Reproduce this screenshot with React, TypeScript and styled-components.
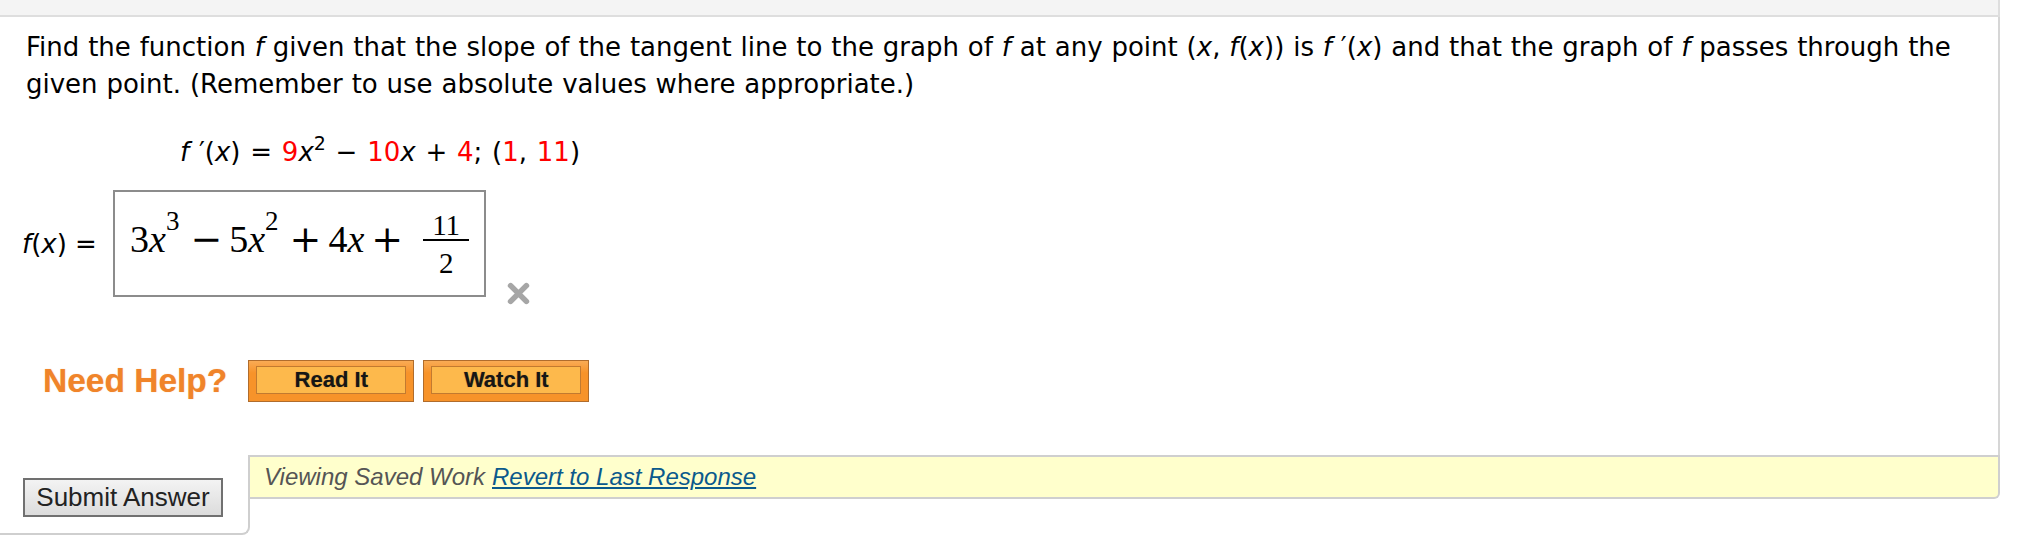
import { createGlobalStyle, styled } from 'styled-components';

const GlobalStyle = createGlobalStyle`
  body {
    margin: 0;
    background: #fff;
  }
`;

const Card = styled.div`
  width: 2000px;
  font-family: 'DejaVu Sans', Verdana, sans-serif;
  color: #000;
`;

const TopStrip = styled.div`
  height: 15px;
  background: #f4f4f4;
  border-bottom: 2px solid #dedede;
  border-right: 2px solid #dedede;
`;

const Body = styled.div`
  border-right: 2px solid #d6d6d6;
  padding: 12px 0 53px 26px;
`;

const Question = styled.p`
  margin: 0;
  font-size: 26px;
  line-height: 36.5px;
  word-spacing: 0.6px;
`;

const Formula = styled.div`
  margin-top: 32px;
  padding-left: 154px;
  font-size: 26px;
  line-height: 36px;
  word-spacing: 1.5px;
`;

const Red = styled.span`
  color: #f00;
`;

const Sup = styled.sup`
  font-size: 19px;
  vertical-align: 11px;
  line-height: 0;
`;

const AnswerRow = styled.div`
  display: flex;
  align-items: center;
  margin-top: 20px;
  margin-left: -4px;
`;

const Label = styled.span`
  width: 91px;
  font-size: 26px;
`;

const MathBox = styled.div`
  width: 373px;
  height: 107px;
  box-sizing: border-box;
  border: 2px solid #8c8c8c;
  padding: 17px 0 0 15px;
  font-family: 'Liberation Serif', 'DejaVu Serif', serif;
  font-size: 38px;
  line-height: 60px;
  white-space: nowrap;
`;

const Var = styled.i`
  font-style: italic;
`;

const Power = styled.span`
  font-size: 27px;
  vertical-align: 22px;
  line-height: 0;
  margin-right: 4px;
`;

const Op = styled.span`
  font-family: 'DejaVu Serif', serif;
  font-size: 38px;
  line-height: 0;
  margin: 0 7px;
`;

const Fraction = styled.span`
  display: inline-flex;
  flex-direction: column;
  align-items: center;
  vertical-align: 17px;
  margin-left: 13px;
  font-size: 29px;
  line-height: 28px;
`;

const Numerator = styled.span`
  padding: 0 9px;
`;

const Bar = styled.span`
  align-self: stretch;
  height: 2px;
  background: #000;
`;

const Denominator = styled.span`
  padding-top: 8px;
`;

const WrongMark = styled.svg`
  align-self: flex-end;
  margin: 0 0 -10px 19px;
  filter: blur(0.5px);
`;

const HelpRow = styled.div`
  display: flex;
  align-items: center;
  gap: 9px;
  margin-top: 63px;
  margin-left: 17px;
`;

const NeedHelp = styled.span`
  font-family: 'Liberation Sans', Arial, sans-serif;
  font-weight: bold;
  font-size: 33.5px;
  color: #f0842a;
  margin-right: 12px;
  text-shadow: 0 0 1px rgba(240, 132, 42, 0.5);
`;

const HelpButton = styled.button`
  width: 166px;
  height: 42px;
  box-sizing: border-box;
  border: 1px solid #b06c2c;
  background: linear-gradient(#f9ab55, #f7932a 30%, #f7932a);
  padding: 5px 7px 7px;
  display: flex;
  cursor: pointer;
`;

const HelpLabel = styled.span`
  flex: 1;
  display: flex;
  align-items: center;
  justify-content: center;
  border: 1px solid #c27a30;
  background: #fdb94c;
  font-family: 'Liberation Sans', Arial, sans-serif;
  font-weight: bold;
  font-size: 22px;
  color: #161616;
  text-shadow: 0 0 1px rgba(0, 0, 0, 0.4);
`;

const Footer = styled.div`
  display: flex;
  align-items: flex-start;
`;

const SubmitCell = styled.div`
  width: 250px;
  height: 80px;
  box-sizing: border-box;
  border-right: 2px solid #cfcfcf;
  border-bottom: 2px solid #cfcfcf;
  border-bottom-right-radius: 8px;
  padding: 23px 0 0 23px;
`;

const SubmitButton = styled.button`
  width: 200px;
  height: 39px;
  box-sizing: border-box;
  border: 2px solid #707070;
  background: linear-gradient(#f3f3f3, #dcdcdc);
  padding: 0;
  font-family: 'Liberation Sans', Arial, sans-serif;
  font-size: 26px;
  color: #222;
`;

const Notice = styled.div`
  flex: 1;
  height: 44px;
  box-sizing: border-box;
  display: flex;
  align-items: center;
  gap: 7px;
  padding-left: 14px;
  background: #ffffcc;
  border: 2px solid #cfcfcf;
  border-left: none;
  border-bottom-right-radius: 6px;
  font-family: 'Liberation Sans', Arial, sans-serif;
  font-style: italic;
  font-size: 24px;
  color: #555;
`;

const RevertLink = styled.a`
  color: #0b5a8c;
  text-decoration: underline;
`;

export default function App() {
  return (
    <>
      <GlobalStyle />
      <Card>
        <TopStrip />
        <Body>
          <Question>
            Find the function <i>f</i> given that the slope of the tangent line to the graph of <i>f</i> at
            any point (<i>x</i>, <i>f</i>(<i>x</i>)) is <i>f</i> ′(<i>x</i>) and that the graph of{' '}
            <i>f</i> passes through the
            <br />
            given point. (Remember to use absolute values where appropriate.)
          </Question>
          <Formula>
            <i>f</i> ′(<i>x</i>) = <Red>9</Red>
            <i>x</i>
            <Sup>2</Sup> − <Red>10</Red>
            <i>x</i> + <Red>4</Red>; (<Red>1</Red>, <Red>11</Red>)
          </Formula>
          <AnswerRow>
            <Label>
              <i>f</i>(<i>x</i>) =
            </Label>
            <MathBox>
              3<Var>x</Var>
              <Power>3</Power>
              <Op>−</Op>5<Var>x</Var>
              <Power>2</Power>
              <Op>+</Op>4<Var>x</Var>
              <Op>+</Op>
              <Fraction>
                <Numerator>11</Numerator>
                <Bar />
                <Denominator>2</Denominator>
              </Fraction>
            </MathBox>
            <WrongMark width="27" height="27" viewBox="0 0 24 24">
              <path d="M5 5 L19 19 M19 5 L5 19" stroke="#a6a6a6" strokeWidth="5" strokeLinecap="round" />
            </WrongMark>
          </AnswerRow>
          <HelpRow>
            <NeedHelp>Need Help?</NeedHelp>
            <HelpButton>
              <HelpLabel>Read It</HelpLabel>
            </HelpButton>
            <HelpButton>
              <HelpLabel>Watch It</HelpLabel>
            </HelpButton>
          </HelpRow>
        </Body>
        <Footer>
          <SubmitCell>
            <SubmitButton>Submit Answer</SubmitButton>
          </SubmitCell>
          <Notice>
            Viewing Saved Work <RevertLink href="#">Revert to Last Response</RevertLink>
          </Notice>
        </Footer>
      </Card>
    </>
  );
}
